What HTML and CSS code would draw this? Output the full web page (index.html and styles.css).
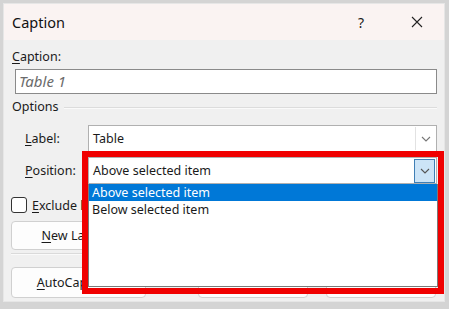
FILE: index.html
```html
<!DOCTYPE html>
<html>
<head>
<meta charset="utf-8">
<link rel="stylesheet" href="styles.css">
</head>
<body>
<div class="dialog">
  <div class="titlebar">
    <span class="title">Caption</span>
    <span class="help">?</span>
    <span class="close">
      <svg width="12" height="12" viewBox="0 0 12 12"><path d="M1 1L11 11M11 1L1 11" stroke="#222" stroke-width="1.1" fill="none"/></svg>
    </span>
  </div>
  <div class="body">
    <div class="lbl"><u>C</u>aption:</div>
    <div class="input">Table 1</div>
    <div class="group"><span>Options</span><div class="gline"></div></div>
    <div class="row r1">
      <div class="rlabel"><u>L</u>abel:</div>
      <div class="select">
        <span class="val">Table</span>
        <span class="arrow"><svg width="10" height="6" viewBox="0 0 10 6"><path d="M1 1L5 5L9 1" stroke="#777" stroke-width="1.1" fill="none"/></svg></span>
      </div>
    </div>
    <div class="row r2">
      <div class="rlabel"><u>P</u>osition:</div>
      <div class="select">
        <span class="val">Above selected item</span>
        <span class="arrow on"><svg width="10" height="6" viewBox="0 0 10 6"><path d="M1 1L5 5L9 1" stroke="#555" stroke-width="1.1" fill="none"/></svg></span>
      </div>
    </div>
    <div class="check"><span class="box"></span><span class="ctext"><u>E</u>xclude label from caption</span></div>
    <div class="btnrow">
      <div class="btn b1"><u>N</u>ew Label...</div>
      <div class="btn b2">Delete Label</div>
      <div class="btn b3">Numbering...</div>
    </div>
    <div class="sep"></div>
    <div class="btnrow bottom">
      <div class="btn b4"><u>A</u>utoCaption...</div>
      <div class="btn b5">OK</div>
      <div class="btn b6">Close</div>
    </div>
  </div>
  <div class="listbox">
    <div class="item sel">Above selected item</div>
    <div class="item">Below selected item</div>
  </div>
</div>
<div class="redbox"></div>
</body>
</html>
```

FILE: styles.css
```css
html, body {
  margin: 0;
  padding: 0;
}
body {
  background: #d4d4d4;
  width: 449px;
  height: 309px;
  overflow: hidden;
  font-family: "Noto Sans", "Open Sans", sans-serif;
  font-size: 12.5px;
  color: #1a1a1a;
  position: relative;
}
.dialog {
  position: relative;
  margin: 4px 0 0 4px;
  width: 440px;
  height: 297px;
  background: #f0f0f0;
  box-shadow: 0 0 0 1px #e6e6e6;
  overflow: hidden;
}
.titlebar {
  height: 36px;
  background: #faf3f2;
  display: flex;
  align-items: center;
  padding-left: 8px;
}
.title {
  font-size: 14.5px;
  color: #111;
  flex: 1;
}
.help {
  font-size: 14px;
  width: 12px;
  text-align: center;
  margin-right: 44px;
}
.close {
  display: flex;
  margin-right: 21px;
}
.body {
  padding: 0 7px 0 8px;
}
u {
  text-decoration: underline;
  text-underline-offset: 2px;
}
.lbl {
  line-height: 18px;
  margin-top: 8px;
}
.input {
  margin: 3px 0 0 3px;
  height: 23px;
  border: 1px solid #8a8a8a;
  background: #fff;
  font-style: italic;
  color: #6b6b6b;
  font-size: 15px;
  line-height: 23px;
  padding-left: 3px;
}
.group {
  display: flex;
  align-items: center;
  margin-top: 4px;
  line-height: 18px;
}
.gline {
  flex: 1;
  height: 1px;
  background: #dcdcdc;
  border-bottom: 1px solid #fafafa;
  margin-left: 6px;
  margin-top: 2px;
}
.row {
  display: flex;
  align-items: center;
}
.r1 { margin-top: 9px; }
.r2 { margin-top: 5px; }
.rlabel {
  width: 63px;
  padding-left: 13px;
}
.select {
  flex: 1;
  height: 25px;
  border: 1px solid #b0b0b0;
  background: #fff;
  display: flex;
  align-items: center;
  padding-left: 4px;
}
.val { flex: 1; }
.arrow {
  width: 19px;
  height: 23px;
  margin-right: 1px;
  display: flex;
  align-items: center;
  justify-content: center;
  border-left: 1px solid #e2e2e2;
}
.arrow.on {
  background: #cce4f7;
  border: 1px solid #3f7fb5;
  height: 22px;
}
.check {
  display: flex;
  align-items: center;
  margin-top: 13px;
  margin-left: -1px;
  height: 16px;
}
.box {
  flex: none;
  width: 14px;
  height: 14px;
  border: 1px solid #333;
  border-radius: 3px;
  background: #fff;
  margin-right: 5px;
}
.ctext {
  width: 52px;
  white-space: nowrap;
  overflow: hidden;
}
.btnrow {
  display: flex;
  gap: 8px;
  margin-top: 8px;
  margin-left: -1px;
}
.btn {
  height: 27px;
  border: 1px solid #d0d0d0;
  border-radius: 4px;
  background: #fdfdfd;
  display: flex;
  align-items: center;
  justify-content: center;
  white-space: nowrap;
}
.b1, .b2, .b3 { width: 130px; }
.sep {
  height: 1px;
  background: #dadada;
  border-bottom: 1px solid #fafafa;
  margin: 3px 0 0 -1px;
}
.bottom { margin-top: 12px; }
.bottom .btn { height: 29px; }
.b4 { width: 133px; }
.b5 { width: 108px; margin-left: 44px; }
.b6 { width: 108px; margin-left: 10px; }
.listbox {
  position: absolute;
  left: 84px;
  top: 180px;
  width: 348px;
  height: 102px;
  background: #fff;
  border: 1px solid #7a7a7a;
  border-top: none;
}
.item {
  height: 17px;
  line-height: 17px;
  padding-left: 3px;
  font-size: 12.5px;
}
.item.sel {
  background: #0078d7;
  color: #fff;
}
.redbox {
  position: absolute;
  left: 82px;
  top: 151px;
  width: 350px;
  height: 131px;
  border: 6px solid #f00000;
}
```
